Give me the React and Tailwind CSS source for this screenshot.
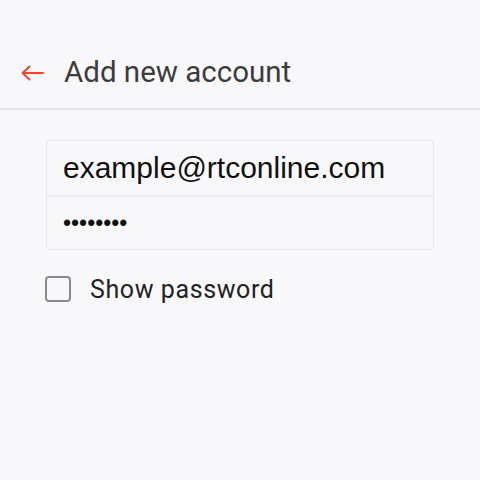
export default function App() {
  return (
    <div className="w-[480px] h-[480px] bg-[#f8f8fa] flex flex-col" style={{ fontFamily: "Roboto, 'Liberation Sans', sans-serif" }}>
      <div className="h-[110px] flex items-center pt-[38px] border-b-2 border-[#e4e4e6]">
        <svg className="ml-[21px] w-[23px] h-[16px] shrink-0" viewBox="0 0 23 16" fill="none" stroke="#e2492f" strokeWidth="2" strokeLinecap="round" strokeLinejoin="round">
          <path d="M22 8H2" />
          <path d="M8.5 1.5L1.5 8L8.5 14.5" />
        </svg>
        <span className="ml-[20px] text-[29.5px] text-[#3c3c3c] leading-none">Add new account</span>
      </div>
      <div className="ml-[46px] mt-[30px] w-[388px] rounded-[4px] border border-[#e6e6e8] bg-[#f8f8fa] flex flex-col">
        <div className="h-[56px] flex items-center pl-[16px] border-b-2 border-[#ececee]">
          <span className="text-[30px] text-[#111] leading-none" style={{ fontFamily: "'Liberation Sans', Arial, sans-serif" }}>example@rtconline.com</span>
        </div>
        <div className="h-[52px] flex items-center pl-[16px]">
          <span className="text-[23px] text-[#111] leading-none" style={{ fontFamily: "'Liberation Sans', Arial, sans-serif" }}>••••••••</span>
        </div>
      </div>
      <div className="ml-[45px] mt-[26px] flex items-center">
        <div className="w-[26px] h-[26px] rounded-[4px] border-2 border-[#8a8a8a]"></div>
        <span className="ml-[19px] text-[25px] tracking-[0.6px] text-[#222] leading-none">Show password</span>
      </div>
    </div>
  );
}
